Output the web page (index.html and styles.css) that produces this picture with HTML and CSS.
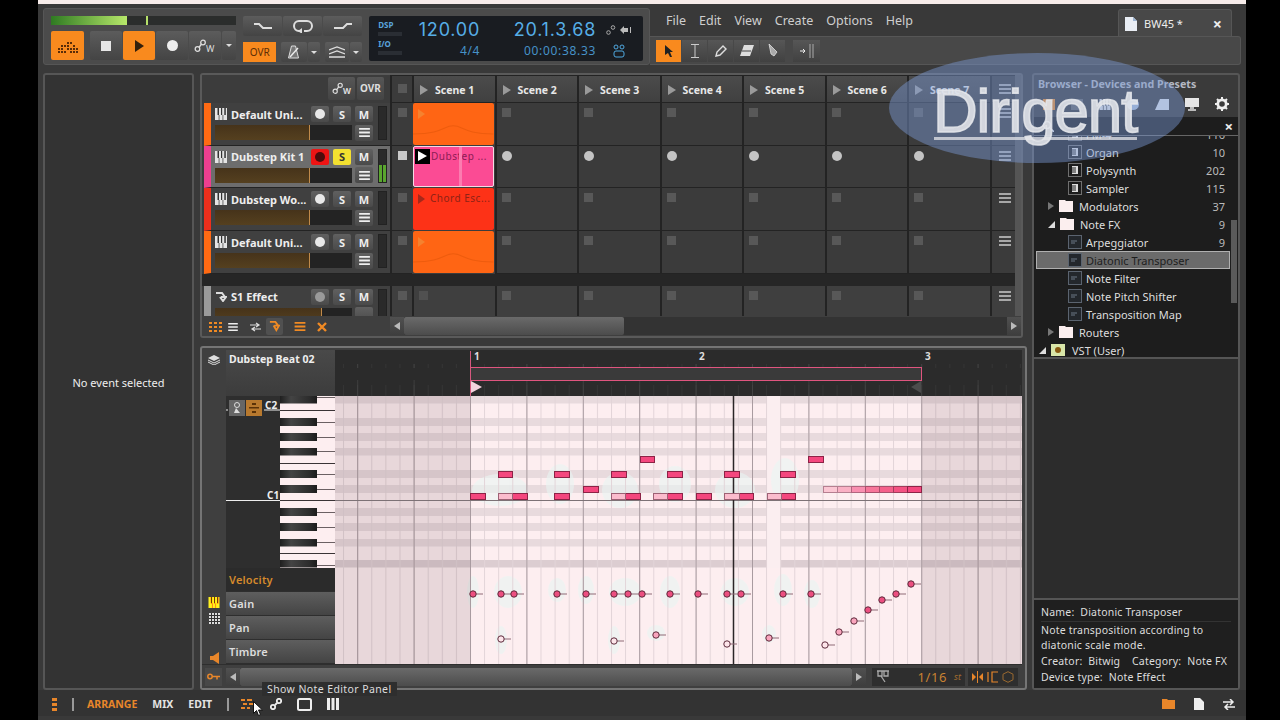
FILE: index.html
```html
<!DOCTYPE html>
<html lang="en">
<head>
  <meta charset="UTF-8">
  <title>Bitwig Studio</title>
  <link rel="stylesheet" href="styles.css">
</head>
<body>
<svg class="defs" width="0" height="0">
  <symbol id="i-piano" viewBox="0 0 12 12"><path d="M0 0h12v12H0z" fill="#e4e4e4"/><path d="M2.5 0h1.5v7H2.5zM6 0h1.2v7H6zM9.3 0h1.5v7H9.3zM3.7 7h.7v5h-.7zM7.6 7h.7v5h-.7z" fill="#333"/></symbol>
  <symbol id="i-list" viewBox="0 0 12 10"><path d="M0 0h12v2H0zM0 4h12v2H0zM0 8h12v2H0z" fill="currentColor"/></symbol>
  <symbol id="i-auto" viewBox="0 0 22 14"><circle cx="3.5" cy="10" r="2.3" fill="none" stroke="currentColor" stroke-width="1.3"/><circle cx="9" cy="3.5" r="2.3" fill="none" stroke="currentColor" stroke-width="1.3"/><path d="M5 8.500 7.500 5" stroke="currentColor" stroke-width="1.3"/><text x="12" y="13" font-size="9" font-family="Noto Sans" fill="currentColor">W</text></symbol>
  <symbol id="i-edit" viewBox="0 0 14 14"><path d="M0 0h14v14H0z" fill="#5b6470"/><path d="M1 1h12v12H1z" fill="#23272c"/><path d="M3 6h6M3 8h4" stroke="#6d7885"/></symbol>
  <symbol id="i-synth" viewBox="0 0 14 14"><path d="M0 0h14v14H0z" fill="#707070"/><path d="M1 1h12v12H1z" fill="#1c1c1c"/><path d="M4 3h6v8H4z" fill="#ddd"/><path d="M4 5h4M4 7h4M4 9h4" stroke="#222"/></symbol>
  <symbol id="i-folder" viewBox="0 0 14 12"><path d="M0 0h6l1 1h7v11H0z" fill="#fbeeee"/></symbol>
</svg>

<div class="app">
  <header class="topbar">
    <section class="transport">
      <div class="tleft">
        <div class="level"><div class="level-fill"></div><div class="level-tick"></div></div>
        <div class="tbuttons">
          <div class="tbtn big on">
            <svg width="20" height="14" viewBox="0 0 20 14"><path d="M0 9h2v2H0zM0 12h2v2H0zM3 6h2v2H3zM3 9h2v2H3zM3 12h2v2H3zM6 6h2v2H6zM6 12h2v2H6zM9 3h2v2H9zM9 6h2v2H9zM9 9h2v2H9zM12 3h2v2h-2zM12 9h2v2h-2zM12 12h2v2h-2zM15 6h2v2h-2zM15 9h2v2h-2zM15 12h2v2h-2zM18 9h2v2h-2zM18 12h2v2h-2z" fill="#5a2c08"/></svg>
          </div>
          <div class="tgroup">
            <div class="tbtn"><span class="stop-sq"></span></div>
            <div class="tbtn on"><span class="play-tri"></span></div>
            <div class="tbtn"><span class="rec-dot"></span></div>
            <div class="tbtn"><svg class="ic-auto" width="22" height="14"><use href="#i-auto"/></svg></div>
            <div class="tbtn narrow"><span class="drop"></span></div>
          </div>
        </div>
      </div>
      <div class="tmid">
        <div class="tgroup upper">
          <div class="tbtn"><svg width="18" height="8" viewBox="0 0 18 8"><path d="M0 2h5l4 4h9" fill="none" stroke="#ddd" stroke-width="2"/></svg></div>
          <div class="tbtn"><svg width="20" height="14" viewBox="0 0 20 14"><path d="M8 12H6a5 5 0 0 1 0-10h8a5 5 0 0 1 0 10h-3" fill="none" stroke="#ddd" stroke-width="2"/><path d="M9 9v6l-4-3z" fill="#ddd"/></svg></div>
          <div class="tbtn"><svg width="18" height="8" viewBox="0 0 18 8"><path d="M0 6h9l4-4h5" fill="none" stroke="#ddd" stroke-width="2"/></svg></div>
        </div>
        <div class="tlower">
          <div class="ovr on">OVR</div>
          <div class="tgroup">
            <div class="tbtn met"><svg width="12" height="14" viewBox="0 0 12 14"><path d="M3.5 1h4l3 12h-10z" fill="#777" stroke="#ddd"/><path d="M2 12 10 3" stroke="#eee" stroke-width="1.4"/></svg></div>
            <div class="tbtn narrow"><span class="drop"></span></div>
          </div>
          <div class="tgroup">
            <div class="tbtn met"><svg width="16" height="12" viewBox="0 0 16 12"><path d="M0 4 8 1l8 3M0 8l8-3 8 3M0 11h16" fill="none" stroke="#ddd" stroke-width="1.3"/></svg></div>
            <div class="tbtn narrow"><span class="drop"></span></div>
          </div>
        </div>
      </div>
      <div class="display">
        <div class="dsp">
          <div class="dsp-label">DSP</div><div class="dsp-bar"></div>
          <div class="dsp-label io">I/O</div><div class="dsp-bar"></div>
        </div>
        <div class="tempo">
          <div class="big-num">120.00</div>
          <div class="small-num">4/4</div>
        </div>
        <div class="position">
          <div class="big-num">20.1.3.68</div>
          <div class="small-num">00:00:38.33</div>
        </div>
        <div class="dicons">
          <svg width="26" height="10" viewBox="0 0 26 10"><circle cx="2.5" cy="7.5" r="1.8" fill="none" stroke="#aaa"/><circle cx="7" cy="2.5" r="1.8" fill="none" stroke="#aaa"/><path d="M14 5l4-4v8zM18 3h4v4h-4zM24 2h1v6h-1z" fill="#bbb"/></svg>
          <svg width="12" height="14" viewBox="0 0 12 14"><circle cx="3" cy="3" r="2" fill="none" stroke="#4fa8e0"/><circle cx="9" cy="3" r="2" fill="none" stroke="#4fa8e0"/><rect x="1" y="7" width="10" height="6" rx="2" fill="none" stroke="#4fa8e0"/></svg>
        </div>
      </div>
    </section>
    <section class="topright">
      <div class="menubar">
        <nav class="menu"><span>File</span><span>Edit</span><span>View</span><span>Create</span><span>Options</span><span>Help</span></nav>
        <div class="doc-tab">
          <svg width="12" height="14" viewBox="0 0 12 14"><path d="M0 0h8l4 4v10H0z" fill="#e9edf4"/><path d="M8 0v4h4" fill="#9db4d2"/></svg>
          <span class="doc-name">BW45 *</span>
          <span class="doc-close">×</span>
        </div>
      </div>
      <div class="toolbar">
        <div class="tool on"><svg width="8" height="12" viewBox="0 0 8 12"><path d="M0 0l8 7H5l2 5-2 0-2-4-3 2z" fill="#222"/></svg></div>
        <div class="tool"><svg width="8" height="14" viewBox="0 0 8 14"><path d="M0 .5h8M0 13.500h8M4 .5v13" stroke="#ccc"/></svg></div>
        <div class="tool"><svg width="12" height="12" viewBox="0 0 12 12"><path d="M1 11l1-4 6-6 3 3-6 6z" fill="none" stroke="#ddd" stroke-width="1.4"/></svg></div>
        <div class="tool"><svg width="14" height="11" viewBox="0 0 14 11"><path d="M4 0h10l-4 11H0z" fill="#ddd"/><path d="M2 6h9" stroke="#444"/></svg></div>
        <div class="tool"><svg width="10" height="13" viewBox="0 0 10 13"><path d="M1 0l8 8-3 4-3-2z" fill="#aaa" stroke="#eee" stroke-width=".7"/></svg></div>
        <div class="tool apart"><svg width="16" height="14" viewBox="0 0 16 14"><path d="M1 7h5M4 5l2 2-2 2" stroke="#eee" fill="none"/><path d="M11 0v14M14 0v14" stroke="#aaa"/></svg></div>
      </div>
    </section>
  </header>

  <main class="main">
    <aside class="inspector">No event selected</aside>

    <div class="center">
      <section class="launcher">
        <div class="lbody">
          <div class="lgrid">
            <div class="lhead-left">
              <div class="mini"><svg width="20" height="13"><use href="#i-auto"/></svg></div>
              <div class="mini">OVR</div>
            </div>
            <div class="cell stopcell head"><i class="sq"></i></div>
            <div class="scene"><b></b>Scene 1</div>
            <div class="scene"><b></b>Scene 2</div>
            <div class="scene"><b></b>Scene 3</div>
            <div class="scene"><b></b>Scene 4</div>
            <div class="scene"><b></b>Scene 5</div>
            <div class="scene"><b></b>Scene 6</div>
            <div class="scene"><b></b>Scene 7</div>
            <div class="cell endcell head"><svg class="lst" width="12" height="10"><use href="#i-list"/></svg></div>

            <div class="track orange">
              <div class="track-main">
                <svg class="pi" width="12" height="12"><use href="#i-piano"/></svg><span class="track-name">Default Uni...</span>
                <span class="btn"><i class="dot"></i></span><span class="btn">S</span><span class="btn">M</span>
                <div class="fader"><div class="fader-fill"></div></div><span class="btn"><svg width="11" height="9"><use href="#i-list"/></svg></span>
              </div>
              <div class="meter"></div>
            </div>
            <div class="cell stopcell"><i class="sq"></i></div>
            <div class="clip c-orange"><span class="clip-tri"></span><svg class="wave" viewBox="0 0 80 40"><path d="M0 30C30 30 30 22 40 22S50 30 80 30" fill="none" stroke="#ee5c0e"/></svg></div>
            <div class="cell"><i class="sq"></i></div><div class="cell"><i class="sq"></i></div><div class="cell"><i class="sq"></i></div><div class="cell"><i class="sq"></i></div><div class="cell"><i class="sq"></i></div><div class="cell"><i class="sq"></i></div>
            <div class="cell endcell"><svg class="lst" width="12" height="10"><use href="#i-list"/></svg></div>

            <div class="track pink sel">
              <div class="track-main">
                <svg class="pi" width="12" height="12"><use href="#i-piano"/></svg><span class="track-name">Dubstep Kit 1</span>
                <span class="btn arm"><i class="dot"></i></span><span class="btn solo">S</span><span class="btn">M</span>
                <div class="fader"><div class="fader-fill"></div></div><span class="btn"><svg width="11" height="9"><use href="#i-list"/></svg></span>
              </div>
              <div class="meter"><div class="meter-on"></div></div>
            </div>
            <div class="cell stopcell"><i class="sq lit"></i></div>
            <div class="clip c-pink playing"><span class="play-box"></span><span class="clip-name">Dubstep ...</span><span class="playline"></span></div>
            <div class="cell"><i class="rd"></i></div><div class="cell"><i class="rd"></i></div><div class="cell"><i class="rd"></i></div><div class="cell"><i class="rd"></i></div><div class="cell"><i class="rd"></i></div><div class="cell"><i class="rd"></i></div>
            <div class="cell endcell"><svg class="lst" width="12" height="10"><use href="#i-list"/></svg></div>

            <div class="track red">
              <div class="track-main">
                <svg class="pi" width="12" height="12"><use href="#i-piano"/></svg><span class="track-name">Dubstep Wo...</span>
                <span class="btn"><i class="dot"></i></span><span class="btn">S</span><span class="btn">M</span>
                <div class="fader"><div class="fader-fill"></div></div><span class="btn"><svg width="11" height="9"><use href="#i-list"/></svg></span>
              </div>
              <div class="meter"></div>
            </div>
            <div class="cell stopcell"><i class="sq"></i></div>
            <div class="clip c-red"><span class="clip-tri dark"></span><span class="clip-name ind">Chord Esc...</span></div>
            <div class="cell"><i class="sq"></i></div><div class="cell"><i class="sq"></i></div><div class="cell"><i class="sq"></i></div><div class="cell"><i class="sq"></i></div><div class="cell"><i class="sq"></i></div><div class="cell"><i class="sq"></i></div>
            <div class="cell endcell"><svg class="lst" width="12" height="10"><use href="#i-list"/></svg></div>

            <div class="track orange">
              <div class="track-main">
                <svg class="pi" width="12" height="12"><use href="#i-piano"/></svg><span class="track-name">Default Uni...</span>
                <span class="btn"><i class="dot"></i></span><span class="btn">S</span><span class="btn">M</span>
                <div class="fader"><div class="fader-fill"></div></div><span class="btn"><svg width="11" height="9"><use href="#i-list"/></svg></span>
              </div>
              <div class="meter"></div>
            </div>
            <div class="cell stopcell"><i class="sq"></i></div>
            <div class="clip c-orange"><span class="clip-tri"></span><svg class="wave" viewBox="0 0 80 40"><path d="M0 30C30 30 30 22 40 22S50 30 80 30" fill="none" stroke="#ee5c0e"/></svg></div>
            <div class="cell"><i class="sq"></i></div><div class="cell"><i class="sq"></i></div><div class="cell"><i class="sq"></i></div><div class="cell"><i class="sq"></i></div><div class="cell"><i class="sq"></i></div><div class="cell"><i class="sq"></i></div>
            <div class="cell endcell"><svg class="lst" width="12" height="10"><use href="#i-list"/></svg></div>

            <div class="spacer"></div>

            <div class="track grey clipped">
              <div class="track-main">
                <svg class="pi" width="12" height="10" viewBox="0 0 12 10"><path d="M1 1h6l3 4M6 5h5l-3 4-3-4" fill="none" stroke="#ddd" stroke-width="2"/></svg><span class="track-name">S1 Effect</span>
                <span class="btn"><i class="dot dim"></i></span><span class="btn">S</span><span class="btn">M</span>
                <div class="fader"><div class="fader-fill long"></div></div><span class="btn"></span>
              </div>
              <div class="meter"></div>
            </div>
            <div class="cell stopcell fx"><i class="sq"></i></div>
            <div class="cell fx"><i class="sq dim"></i></div><div class="cell fx"><i class="sq"></i></div><div class="cell fx"><i class="sq"></i></div><div class="cell fx"><i class="sq"></i></div><div class="cell fx"><i class="sq"></i></div><div class="cell fx"><i class="sq"></i></div><div class="cell fx"><i class="sq"></i></div>
            <div class="cell endcell fx"><svg class="lst" width="12" height="10"><use href="#i-list"/></svg></div>
          </div>
          <div class="vscroll"></div>
        </div>
        <div class="lfoot">
          <div class="lfoot-icons">
            <svg width="13" height="10" viewBox="0 0 13 10"><path d="M0 0h3v2H0zM5 0h3v2H5zM10 0h3v2h-3zM0 4h3v2H0zM5 4h3v2H5zM10 4h3v2h-3zM0 8h3v2H0zM5 8h3v2H5zM10 8h3v2h-3z" fill="#f08a24"/></svg>
            <svg class="wh" width="12" height="8"><use href="#i-list"/></svg>
            <svg class="gap" width="11" height="10" viewBox="0 0 11 10"><path d="M0 3h8M6 1l3 2-3 2M11 7H3M5 5 2 7l3 2" fill="none" stroke="#ddd" stroke-width="1.2"/></svg>
            <span class="boxed"><svg width="11" height="11" viewBox="0 0 12 12"><path d="M1 1h6l3 4M6 5h5l-3 5-3-5" fill="none" stroke="#f08a24" stroke-width="2"/></svg></span>
            <svg class="or gap" width="12" height="9"><use href="#i-list"/></svg>
            <svg class="gap" width="10" height="10" viewBox="0 0 10 10"><path d="M1 1l8 8M9 1l-8 8" stroke="#f08a24" stroke-width="2.4"/></svg>
          </div>
          <div class="hscroll">
            <span class="sbtn"><b class="tri-l"></b></span>
            <div class="strack"><div class="sthumb"></div></div>
            <span class="sbtn"><b class="tri-r"></b></span>
          </div>
        </div>
      </section>

      <section class="editor">
        <div class="estrip">
          <svg class="layers" width="12" height="10" viewBox="0 0 12 10"><path d="M6 0l6 3-6 3-6-3z" fill="#ddd"/><path d="M0 5l6 3 6-3M0 7l6 3 6-3" fill="none" stroke="#ddd"/></svg>
          <div class="estrip-low">
            <svg width="12" height="11"><use href="#i-piano"/></svg>
            <svg width="11" height="11" viewBox="0 0 11 11"><path d="M0 0h11v11H0z" fill="#ddd"/><path d="M2.5 0v11M5.500 0v11M8.500 0v11M0 2.500h11M0 5.500h11M0 8.500h11" stroke="#333"/></svg>
            <svg class="spk" width="9" height="12" viewBox="0 0 9 12"><path d="M0 4h3l6-4v12L3 8H0z" fill="#e8862a"/></svg>
          </div>
        </div>
        <div class="ehead">Dubstep Beat 02</div>
        <div class="eruler">
          <svg width="687" height="46" viewBox="335 350 687 46">
            <defs>
              <pattern id="rsub" x="470" y="0" width="14.1" height="46" patternUnits="userSpaceOnUse"><path d="M0 17v29" stroke="#3d3d3d"/></pattern>
              <pattern id="rbeat" x="470" y="0" width="56.4" height="46" patternUnits="userSpaceOnUse"><path d="M0 12v34" stroke="#505050"/></pattern>
              <linearGradient id="blk" x1="0" x2="1" y1="0" y2="0"><stop offset="0" stop-color="#1f1f1f"/><stop offset=".3" stop-color="#444"/><stop offset=".8" stop-color="#2c2c2c"/><stop offset="1" stop-color="#1c1c1c"/></linearGradient>
            </defs>
            <rect x="335" y="350" width="687" height="46" fill="#2b2b2b"/>
            <rect x="335" y="364" width="687" height="32" fill="url(#rsub)"/>
            <rect x="335" y="364" width="687" height="32" fill="url(#rbeat)"/>
            <rect x="470.500" y="367.500" width="451" height="13" fill="#3a3a3a" stroke="#e0557f"/>
            <path d="M470.500 351v45" stroke="#d6587e"/>
            <path d="M471 381l11 6-11 6z" fill="#f3d3dc"/>
            <path d="M921 381l-10 6 10 6z" fill="#4c4c4c"/>
            <text x="474" y="360" class="bar-num">1</text>
            <text x="699" y="360" class="bar-num">2</text>
            <text x="925" y="360" class="bar-num">3</text>
          </svg>
        </div>
        <div class="keys">
          <span class="kbtn"><svg width="11" height="12" viewBox="0 0 11 12"><circle cx="5" cy="3" r="2.500" fill="none" stroke="#ddd"/><path d="M4 6l4 5H2z" fill="#ddd"/></svg></span><span class="kbtn amber"><svg width="10" height="12" viewBox="0 0 10 12"><path d="M0 5h10v1.500H0zM3 1h4v2H3zM3 9h4v2H3z" fill="#5a3208"/></svg></span>
          <span class="klabel c2">C2</span>
          <span class="klabel c1">C1</span>
          <svg class="piano" width="109" height="172" viewBox="226 396 109 172">
            <rect x="280" y="396" width="55" height="172" fill="#fdeef0"/>
            <path d="M226 410h2M264 410h16M226 500.500h54" stroke="#eee"/>
            <path d="M280 410.500h55M280 463.500h55M280 500.500h55M280 553.500h55" stroke="#3a3335"/>
            <path d="M317 422.500h18M317 437.500h18M317 451.500h18M317 474.500h18M317 489.500h18M317 512.500h18M317 527.500h18M317 542.500h18M317 565.500h18M317 397.500h18" stroke="#6b6063"/>
            <g fill="url(#blk)">
              <rect x="280" y="396" width="37" height="7.500"/><rect x="280" y="418" width="37" height="8"/><rect x="280" y="433" width="37" height="8"/><rect x="280" y="448" width="37" height="7.500"/><rect x="280" y="470" width="37" height="8"/><rect x="280" y="485" width="37" height="8"/><rect x="280" y="508" width="37" height="8"/><rect x="280" y="523" width="37" height="8"/><rect x="280" y="539" width="37" height="7.500"/><rect x="280" y="560" width="37" height="7.500"/>
            </g>
          </svg>
        </div>
        <div class="roll">
          <svg width="687" height="268" viewBox="335 396 687 268">
            <defs>
              <pattern id="sub" x="470" y="0" width="14.1" height="20" patternUnits="userSpaceOnUse"><path d="M.5 0v20" stroke="#e2d4d8"/></pattern>
              <pattern id="beat" x="470" y="0" width="56.4" height="20" patternUnits="userSpaceOnUse"><path d="M.5 0v20" stroke="#a99ba0"/></pattern>
            </defs>
            <rect x="335" y="396" width="687" height="268" fill="#fdeef0"/>
            <g fill="#e8dadd">
              <rect x="335" y="396" width="687" height="7.500"/><rect x="335" y="418" width="687" height="8"/><rect x="335" y="433" width="687" height="8"/><rect x="335" y="448" width="687" height="7.500"/><rect x="335" y="470" width="687" height="8"/><rect x="335" y="485" width="687" height="8"/><rect x="335" y="508" width="687" height="8"/><rect x="335" y="523" width="687" height="8"/><rect x="335" y="539" width="687" height="7.500"/><rect x="335" y="560" width="687" height="7.500" fill="#dccdd1"/>
            </g>
            <rect x="767" y="396" width="14" height="172" fill="#fbeef0"/>
            <g fill="#e9f6f3" opacity=".6">
              <ellipse cx="560" cy="484" rx="14" ry="20"/><ellipse cx="620" cy="490" rx="18" ry="18"/><ellipse cx="675" cy="484" rx="16" ry="18"/><ellipse cx="735" cy="490" rx="20" ry="18"/><ellipse cx="785" cy="480" rx="14" ry="22"/><ellipse cx="500" cy="490" rx="28" ry="16"/>
              <ellipse cx="473" cy="592" rx="6" ry="16"/><ellipse cx="508" cy="592" rx="14" ry="16"/><ellipse cx="557" cy="590" rx="9" ry="12"/><ellipse cx="586" cy="590" rx="8" ry="14"/><ellipse cx="625" cy="592" rx="16" ry="14"/><ellipse cx="670" cy="592" rx="10" ry="16"/><ellipse cx="735" cy="592" rx="14" ry="14"/><ellipse cx="783" cy="590" rx="9" ry="16"/><ellipse cx="812" cy="594" rx="8" ry="14"/>
              <ellipse cx="501" cy="640" rx="6" ry="14"/><ellipse cx="614" cy="640" rx="6" ry="14"/><ellipse cx="656" cy="633" rx="9" ry="8"/><ellipse cx="769" cy="634" rx="7" ry="9"/>
            </g>
            <rect x="335" y="396" width="687" height="268" fill="url(#sub)"/>
            <rect x="335" y="396" width="687" height="268" fill="url(#beat)"/>
            <rect x="335" y="396" width="135" height="268" fill="#5a3c44" opacity=".13"/>
            <rect x="922" y="396" width="100" height="268" fill="#5a3c44" opacity=".13"/>
            <path d="M335 500.500h687" stroke="#7d7276"/>
            <path d="M733.500 396v268" stroke="#2b2527" stroke-width="1.500"/>
            <g class="notes">
              <rect x="640.500" y="456.500" width="14" height="6"/><rect x="808.500" y="456.500" width="15" height="6"/>
              <rect x="498.500" y="471.500" width="14" height="6"/><rect x="554.500" y="471.500" width="15" height="6"/><rect x="611.500" y="471.500" width="15" height="6"/><rect x="667.500" y="471.500" width="15" height="6"/><rect x="724.500" y="471.500" width="15" height="6"/><rect x="780.500" y="471.500" width="15" height="6"/>
              <rect x="583.500" y="486.500" width="15" height="6"/>
              <rect x="470.500" y="493.500" width="15" height="6"/><rect x="512.500" y="493.500" width="15" height="6"/><rect x="554.500" y="493.500" width="15" height="6"/><rect x="625.500" y="493.500" width="15" height="6"/><rect x="667.500" y="493.500" width="15" height="6"/><rect x="696.500" y="493.500" width="15" height="6"/><rect x="739.500" y="493.500" width="14" height="6"/><rect x="781.500" y="493.500" width="14" height="6"/>
              <g class="soft">
                <rect x="498.500" y="493.500" width="14" height="6"/><rect x="611.500" y="493.500" width="14" height="6"/><rect x="653.500" y="493.500" width="14" height="6"/><rect x="724.500" y="493.500" width="15" height="6"/><rect x="767.500" y="493.500" width="14" height="6"/>
              </g>
              <rect class="n1" x="823.500" y="486.500" width="14" height="6"/><rect class="n2" x="837.500" y="486.500" width="14" height="6"/><rect class="n3" x="851.500" y="486.500" width="14" height="6"/><rect class="n4" x="865.500" y="486.500" width="14" height="6"/><rect class="n5" x="879.500" y="486.500" width="14" height="6"/><rect class="n6" x="893.500" y="486.500" width="14" height="6"/><rect x="907.500" y="486.500" width="14" height="6"/>
            </g>
            <g class="stems">
              <path d="M473 594h10M501 594h10M514 594h10M557 594h10M586 594h10M614 594h10M628 594h10M642 594h10M670 594h10M698 594h10M727 594h10M741 594h10M783 594h10M811 594h10M501 639h10M614 641h10M656 635h10M727 644h10M769 638h10M825 645h10M839 632h10M854 621h10M868 610h10M882 600h10M896 594h10M911 584h10"/>
            </g>
            <g class="vel">
              <circle cx="473" cy="594"/><circle cx="501" cy="594"/><circle cx="514" cy="594"/><circle cx="557" cy="594"/><circle cx="586" cy="594"/><circle cx="614" cy="594"/><circle cx="628" cy="594"/><circle cx="642" cy="594"/><circle cx="670" cy="594"/><circle cx="698" cy="594"/><circle cx="727" cy="594"/><circle cx="741" cy="594"/><circle cx="783" cy="594"/><circle cx="811" cy="594"/><circle cx="868" cy="610"/><circle cx="882" cy="600"/><circle cx="896" cy="594"/><circle cx="911" cy="584"/>
              <circle class="v2" cx="854" cy="621"/><circle class="v2" cx="839" cy="632"/><circle class="v2" cx="769" cy="638"/><circle class="v2" cx="656" cy="635"/>
              <circle class="v3" cx="501" cy="639"/><circle class="v3" cx="614" cy="641"/><circle class="v3" cx="727" cy="644"/><circle class="v3" cx="825" cy="645"/>
            </g>
          </svg>
        </div>
        <div class="elabels">
          <div class="elabel vel-on">Velocity</div>
          <div class="elabel">Gain</div>
          <div class="elabel">Pan</div>
          <div class="elabel">Timbre</div>
        </div>
        <div class="efoot">
          <span class="keybtn"><svg width="13" height="7" viewBox="0 0 13 7"><circle cx="3" cy="3.500" r="2.200" fill="none" stroke="#e8862a" stroke-width="1.500"/><path d="M5 3.500h8M10 3.500v3" stroke="#e8862a" stroke-width="1.500"/></svg></span>
          <div class="hscroll wide">
            <span class="sbtn"><b class="tri-l"></b></span>
            <div class="strack"><div class="sthumb full"></div></div>
            <span class="sbtn"><b class="tri-r"></b></span>
          </div>
          <div class="gridbox">
            <svg width="14" height="13" viewBox="0 0 14 13"><path d="M1 1h12M2 1v5h4V1M8 1v5h4V1M5 6l4 6" fill="none" stroke="#aaa" stroke-width="1.300"/></svg>
            <span class="gridval">1/16</span><span class="gridunit">st</span>
          </div>
          <div class="snapbox">
            <svg width="42" height="12" viewBox="0 0 42 12"><path d="M0 2l4 4-4 4zM11 2L7 6l4 4z" fill="#e8862a"/><path d="M5.500 0v12" stroke="#e8862a"/><path d="M16 1v10M26 1h-6v10h6" fill="none" stroke="#e8862a" stroke-width="1.200"/><path d="M36 .7l5 2.500v5.600l-5 2.500-5-2.500V3.200z" fill="none" stroke="#9c6a30"/></svg>
          </div>
        </div>
      </section>
    </div>

    <aside class="browser">
      <h2 class="b-title">Browser - Devices and Presets</h2>
      <div class="b-tabs">
        <span class="b-ic orange"></span>
        <span class="b-ic"></span>
        <svg width="12" height="11"><use href="#i-piano"/></svg>
        <span class="b-ic disc"></span>
        <svg width="14" height="11" viewBox="0 0 14 11"><path d="M5 0h9v11H0z" fill="#dfe3ea"/></svg>
        <svg width="14" height="13" viewBox="0 0 14 13"><path d="M0 0h14v9H0z" fill="#e6e6e6"/><path d="M5 9h4v2h2v2H3v-2h2z" fill="#bbb"/></svg>
        <svg width="14" height="14" viewBox="0 0 14 14"><circle cx="7" cy="7" r="4.200" fill="none" stroke="#eee" stroke-width="2.800"/><path d="M7 0v3M7 11v3M0 7h3M11 7h3M2 2l2 2M10 10l2 2M12 2l-2 2M4 10l-2 2" stroke="#eee" stroke-width="2"/></svg>
      </div>
      <div class="b-search"><svg width="12" height="12" viewBox="0 0 12 12"><circle cx="5" cy="5" r="3.500" fill="none" stroke="#eee" stroke-width="1.600"/><path d="M8 8l4 4" stroke="#eee" stroke-width="1.600"/></svg><span class="b-x">×</span></div>
      <div class="b-list">
        <div class="b-rows">
          <div class="row d2"><svg width="14" height="14"><use href="#i-synth"/></svg><span class="rname">FM-4</span><span class="rcount">116</span></div>
          <div class="row d2"><svg width="14" height="14"><use href="#i-synth"/></svg><span class="rname">Organ</span><span class="rcount">10</span></div>
          <div class="row d2"><svg width="14" height="14"><use href="#i-synth"/></svg><span class="rname">Polysynth</span><span class="rcount">202</span></div>
          <div class="row d2"><svg width="14" height="14"><use href="#i-synth"/></svg><span class="rname">Sampler</span><span class="rcount">115</span></div>
          <div class="row d1"><b class="arrow"></b><svg width="14" height="12"><use href="#i-folder"/></svg><span class="rname">Modulators</span><span class="rcount">37</span></div>
          <div class="row d1"><b class="arrow open"></b><svg width="14" height="12"><use href="#i-folder"/></svg><span class="rname">Note FX</span><span class="rcount">9</span></div>
          <div class="row d2"><svg width="14" height="14"><use href="#i-edit"/></svg><span class="rname">Arpeggiator</span><span class="rcount">9</span></div>
          <div class="row d2 selected"><svg width="14" height="14"><use href="#i-edit"/></svg><span class="rname">Diatonic Transposer</span></div>
          <div class="row d2"><svg width="14" height="14"><use href="#i-edit"/></svg><span class="rname">Note Filter</span></div>
          <div class="row d2"><svg width="14" height="14"><use href="#i-edit"/></svg><span class="rname">Note Pitch Shifter</span></div>
          <div class="row d2"><svg width="14" height="14"><use href="#i-edit"/></svg><span class="rname">Transposition Map</span></div>
          <div class="row d1"><b class="arrow"></b><svg width="14" height="12"><use href="#i-folder"/></svg><span class="rname">Routers</span></div>
          <div class="row d0"><b class="arrow open"></b><svg width="14" height="12" viewBox="0 0 14 12"><path d="M0 0h14v12H0z" fill="#d9e6a8"/><circle cx="7" cy="6" r="3" fill="#8a5a10"/></svg><span class="rname">VST (User)</span></div>
        </div>
        <div class="b-scroll"></div>
      </div>
      <div class="b-blank"></div>
      <div class="b-info">
        <div class="info-name">Name:&nbsp; Diatonic Transposer</div>
        <div class="info-desc">Note transposition according to<br>diatonic scale mode.</div>
        <div class="info-line">Creator:&nbsp; Bitwig &nbsp;&nbsp; Category:&nbsp; Note FX</div>
        <div class="info-line">Device type:&nbsp; Note Effect</div>
      </div>
    </aside>
  </main>

  <footer class="bottombar">
    <svg width="5" height="13" viewBox="0 0 5 13"><path d="M0 0h5v3H0zM0 5h5v3H0zM0 10h5v3H0z" fill="#e8862a"/></svg>
    <span class="sep"></span>
    <span class="mode active">ARRANGE</span>
    <span class="mode">MIX</span>
    <span class="mode last">EDIT</span>
    <span class="sep"></span>
    <div class="panels">
      <svg width="14" height="12" viewBox="0 0 14 12"><path d="M0 1h4v2H0zM6 1h5v2H6zM2 5h4v2H2zM8 5h6v2H8zM0 9h4v2H0zM6 9h3v2H6z" fill="#e8862a"/></svg>
      <svg width="12" height="12" viewBox="0 0 12 12"><circle cx="3" cy="9" r="2.200" fill="none" stroke="#eee" stroke-width="1.800"/><circle cx="9" cy="3" r="2.200" fill="none" stroke="#eee" stroke-width="1.800"/><path d="M5 7l2-2" stroke="#eee" stroke-width="1.800"/></svg>
      <svg width="15" height="13" viewBox="0 0 15 13"><rect x="1" y="1" width="13" height="11" rx="1.500" fill="none" stroke="#eee" stroke-width="2"/></svg>
      <svg width="12" height="12" viewBox="0 0 12 12"><path d="M0 0h3v12H0zM4.500 0h3v12h-3zM9 0h3v12H9z" fill="#eee"/></svg>
    </div>
    <div class="bright">
      <svg width="13" height="10" viewBox="0 0 13 10"><path d="M0 0h5l1 1h7v9H0z" fill="#e8862a"/></svg>
      <svg width="10" height="12" viewBox="0 0 10 12"><path d="M0 0h6l4 4v8H0z" fill="#eee"/></svg>
      <svg width="12" height="11" viewBox="0 0 12 11"><path d="M0 3h9M7 0l3 3-3 3M12 8H3M5 5 2 8l3 3" fill="none" stroke="#eee" stroke-width="1.500"/></svg>
    </div>
  </footer>

  <div class="tooltip">Show Note Editor Panel</div>
  <svg class="cursor" width="11" height="15" viewBox="0 0 11 15"><path d="M.5.500v12l3-3 2 5 2-1-2-4.500h4z" fill="#fff" stroke="#111"/></svg>
  <div class="watermark"><div class="wm-ellipse"></div><div class="wm-text">Dirigent</div><div class="wm-line"></div></div>
</div>
</body>
</html>
```

FILE: styles.css
```css
* {
  box-sizing: border-box;
}
html, body {
  margin: 0;
  height: 100%;
  overflow: hidden;
  background: #000;
}
body {
  font-family: "Noto Sans", "Open Sans", sans-serif;
  font-size: 11px;
  color: #ddd;
}
.defs {
  position: absolute;
}
i, b {
  display: block;
}
svg {
  display: block;
  flex: none;
}

.app {
  position: relative;
  width: 1208px;
  height: 720px;
  margin-left: 38px;
  border-top: 4px solid #f7ecea;
  background: #393939;
  overflow: hidden;
}

/* Barra superior */
.topbar {
  display: flex;
  height: 69px;
  padding: 4px 5px 0;
}
.transport {
  display: flex;
  width: 607px;
  height: 57px;
  padding: 7px 6px 0 7px;
  background: #4b4b4b;
  border: 1px solid #565656;
  border-radius: 3px;
}
.tleft {
  width: 186px;
  margin-right: 7px;
}
.level {
  position: relative;
  height: 9px;
  background: #2b2d2c;
}
.level-fill {
  width: 76px;
  height: 9px;
  background: linear-gradient(90deg, #2f7a22, #b7e86a);
}
.level-tick {
  position: absolute;
  left: 95px;
  top: 0;
  width: 2px;
  height: 9px;
  background: #b6e06a;
}
.tbuttons {
  display: flex;
  gap: 6px;
  margin-top: 6px;
}
.tgroup {
  display: flex;
  gap: 1px;
}
.tbtn {
  display: flex;
  flex: none;
  align-items: center;
  justify-content: center;
  width: 32px;
  height: 29px;
  background: linear-gradient(#5c5c5c, #444);
  border-radius: 2px;
  color: #ddd;
}
.tbtn.on, .ovr.on, .tool.on {
  background: #f98a1e;
}
.tbtn.big {
  width: 33px;
}
.tbtn.narrow {
  width: 14px;
}
.stop-sq {
  width: 10px;
  height: 10px;
  background: #e6e6e6;
}
.play-tri {
  border-left: 9px solid #33200c;
  border-top: 6px solid transparent;
  border-bottom: 6px solid transparent;
}
.rec-dot {
  width: 11px;
  height: 11px;
  border-radius: 50%;
  background: #eee;
}
.drop {
  border-top: 3px solid #ddd;
  border-left: 3px solid transparent;
  border-right: 3px solid transparent;
}
.tmid {
  width: 119px;
  margin-right: 7px;
}
.tmid .upper .tbtn {
  width: 39px;
  height: 20px;
}
.tlower {
  display: flex;
  margin-top: 6px;
  gap: 5px;
}
.ovr {
  width: 34px;
  height: 20px;
  font-size: 10px;
  line-height: 21px;
  text-align: center;
  color: #5c2d06;
}
.tlower .tbtn {
  height: 20px;
}
.tlower .tbtn.met {
  width: 26px;
}
.tlower .tgroup:last-child .tbtn.met {
  width: 24px;
}
.tlower .tbtn.narrow {
  width: 12px;
}
.display {
  display: flex;
  width: 275px;
  height: 45px;
  background: #191c21;
  border-radius: 2px;
  padding: 3px 0 0 9px;
  color: #56aee6;
}
.dsp {
  width: 33px;
}
.dsp-label {
  font-size: 8px;
  font-weight: 700;
  line-height: 11px;
  color: #5aa4dc;
}
.dsp-label.io {
  margin-top: 2px;
}
.dsp-bar {
  width: 24px;
  height: 4px;
  margin-top: 2px;
  background: #2a2e34;
}
.big-num {
  font-size: 18px;
  line-height: 22px;
  letter-spacing: .8px;
  text-align: right;
  font-family: "Inter", "Noto Sans", sans-serif;
  font-weight: 400;
}
.small-num {
  margin-top: 3px;
  font-size: 12px;
  line-height: 14px;
  letter-spacing: .7px;
  text-align: right;
  color: #4692c8;
}
.tempo {
  width: 69px;
}
.position {
  width: 116px;
}
.dicons {
  display: flex;
  flex-direction: column;
  align-items: center;
  gap: 9px;
  margin: 6px 0 0 10px;
}

.topright {
  flex: 1;
  display: flex;
  flex-direction: column;
  min-width: 0;
}
.menubar {
  display: flex;
  justify-content: space-between;
  height: 28px;
  padding-right: 9px;
}
.menu {
  display: flex;
  gap: 13px;
  padding: 4px 0 0 16px;
  font-size: 12.5px;
  line-height: 17px;
  color: #cfcfcf;
}
.doc-tab {
  display: flex;
  align-items: center;
  width: 114px;
  height: 28px;
  margin-top: 1px;
  padding: 0 8px 0 6px;
  background: #484848;
  border-radius: 3px 3px 0 0;
  border: 1px solid #565656;
  border-bottom: none;
}
.doc-name {
  flex: 1;
  margin-left: 7px;
  font-size: 11px;
  color: #eee;
}
.doc-close {
  font-size: 16px;
  font-weight: 700;
  color: #eee;
  margin-right: 1px;
}
.toolbar {
  display: flex;
  align-items: center;
  height: 29px;
  padding-left: 6px;
  background: #484848;
  border: 1px solid #565656;
  border-left: none;
  border-radius: 0 3px 3px 0;
}
.tool {
  display: flex;
  align-items: center;
  justify-content: center;
  width: 25px;
  height: 22px;
  margin-right: 1px;
  background: linear-gradient(#565656, #414141);
}
.tool.apart {
  margin-left: 7px;
  width: 27px;
}

/* Zona central */
.main {
  display: grid;
  grid-template-columns: 150px 827px 208px;
  column-gap: 6px;
  height: 617px;
  padding-left: 5px;
}
.inspector {
  margin-right: -1px;
  padding-top: 300px;
  background: #333;
  border: 2px solid #565656;
  border-radius: 3px;
  text-align: center;
  font-size: 11px;
  color: #eee;
}
.center {
  margin-left: 1px;
  display: flex;
  flex-direction: column;
  gap: 8px;
  width: 827px;
}

/* Lanzador de clips */
.launcher {
  height: 265px;
  width: 823px;
  background: #3c3c3c;
  border: 2px solid #5a5a5a;
  border-radius: 3px;
  overflow: hidden;
}
.lbody {
  display: flex;
  height: 241px;
}
.lgrid {
  display: grid;
  grid-template-columns: 188px 22px repeat(7, 82.5px) 25px;
  grid-template-rows: 28px repeat(4, 42.7px) 12px 31px;
  overflow: hidden;
}
.lhead-left {
  display: flex;
  justify-content: flex-end;
  gap: 2px;
  padding: 2px 6px 3px 0;
  background: #3c3c3c;
}
.mini {
  width: 27px;
  height: 23px;
  background: linear-gradient(#565656, #444);
  border-radius: 2px;
  color: #ddd;
  font-size: 10px;
  font-weight: 700;
  line-height: 23px;
  text-align: center;
}
.mini svg {
  margin: 5px 0 0 4px;
}
.cell {
  position: relative;
  background: #3b3b3b;
  border-left: 2px solid #232323;
  border-bottom: 1px solid #232323;
}
.cell.head {
  border-top: 1px solid #232323;
}
.cell.fx {
  background: #3f3f3f;
}
.sq {
  position: absolute;
  left: 5px;
  top: 5px;
  width: 9px;
  height: 9px;
  background: #585858;
}
.sq.lit {
  background: #c9c9c9;
}
.sq.dim {
  background: #505050;
}
.rd {
  position: absolute;
  left: 5px;
  top: 5px;
  width: 10px;
  height: 10px;
  border-radius: 50%;
  background: #c4c4c4;
}
.stopcell .sq {
  left: 6px;
  top: 5px;
}
.stopcell.head .sq {
  top: 8px;
}
.scene {
  display: flex;
  align-items: center;
  padding: 1px 0 0 6px;
  background: linear-gradient(#4b4b4b, #404040);
  border-left: 2px solid #232323;
  border-top: 1px solid #232323;
  border-bottom: 1px solid #232323;
  font-size: 10.5px;
  font-weight: 700;
  color: #e8e8e8;
}
.scene b {
  margin-right: 7px;
  border-left: 8px solid #9a9a9a;
  border-top: 5px solid transparent;
  border-bottom: 5px solid transparent;
}
.lst {
  position: absolute;
  left: 7px;
  top: 5px;
  color: #a8a8a8;
}
.head .lst {
  top: 8px;
}
.clip {
  position: relative;
  margin: 0 1px 1px 1px;
  border-radius: 2px;
  overflow: hidden;
}
.c-orange {
  background: #ff6514;
}
.c-red {
  background: #fd3217;
}
.c-pink {
  background: #fb4b94;
  border: 1px solid #f5d9e4;
}
.wave {
  position: absolute;
  left: 0;
  top: 0;
  width: 100%;
  height: 100%;
}
.clip-tri {
  position: absolute;
  left: 5px;
  top: 6px;
  border-left: 7px solid #f5822f;
  border-top: 5px solid transparent;
  border-bottom: 5px solid transparent;
}
.clip-tri.dark {
  border-left-color: #a5281a;
}
.play-box {
  position: absolute;
  left: 1px;
  top: 2px;
  width: 15px;
  height: 15px;
  background: #000;
}
.play-box::after {
  content: "";
  position: absolute;
  left: 3px;
  top: 2px;
  border-left: 9px solid #fff;
  border-top: 5.5px solid transparent;
  border-bottom: 5.5px solid transparent;
}
.clip-name {
  position: absolute;
  left: 17px;
  top: 2px;
  font-size: 10px;
  letter-spacing: .5px;
  line-height: 14px;
  white-space: nowrap;
  color: #8c1c55;
}
.clip-name.ind {
  top: 3px;
  color: #8e2216;
}
.playline {
  position: absolute;
  left: 45px;
  top: 0;
  width: 3px;
  height: 100%;
  background: #fb7cb0;
}
.spacer {
  grid-column: 1 / -1;
  background: #262626;
}

.track {
  display: flex;
  margin-left: 2px;
  border-left: 7px solid;
  border-bottom: 1px solid #232323;
  background: #404040;
  min-height: 0;
}
.track.orange {
  border-left-color: #ff6a13;
}
.track.pink {
  border-left-color: #ee3f8f;
}
.track.red {
  border-left-color: #ee2f1c;
}
.track.grey {
  border-left-color: #9a9a9a;
}
.track.sel {
  background: #6d6d6d;
}
.track-main {
  display: grid;
  grid-template-columns: 12px 76px repeat(3, 18px);
  grid-template-rows: 16px 15px;
  column-gap: 4px;
  row-gap: 3px;
  width: 162px;
  padding: 3px 0 0 4px;
  align-items: center;
}
.track-name {
  font-size: 11px;
  font-weight: 700;
  color: #eee;
  white-space: nowrap;
}
.btn {
  display: flex;
  align-items: center;
  justify-content: center;
  height: 16px;
  background: linear-gradient(#606060, #4a4a4a);
  border-radius: 2px;
  font-size: 11px;
  font-weight: 700;
  color: #eee;
}
.btn.arm {
  background: #ee1414;
}
.btn.arm .dot {
  background: #4d0c0c;
}
.btn.solo {
  background: #f3e030;
  color: #333;
}
.dot {
  width: 10px;
  height: 10px;
  border-radius: 50%;
  background: #e8e8e8;
}
.dot.dim {
  background: #9a9a9a;
}
.fader {
  grid-column: 1 / 5;
  height: 15px;
  background: #232323;
  width: 137px;
}
.fader-fill {
  width: 95px;
  height: 15px;
  background: linear-gradient(#46331a, #55401f);
  border-right: 1px solid #c08a4a;
}
.fader-fill.long {
  width: 107px;
}
.meter {
  position: relative;
  width: 9px;
  height: 34px;
  margin: 3px 0 0 5px;
  background: #2a2a2a;
  border: 1px solid #222;
}
.meter-on {
  position: absolute;
  left: 0;
  right: 0;
  bottom: 0;
  height: 17px;
  background: linear-gradient(90deg, #5aa62f 45%, #222 45%, #222 55%, #5aa62f 55%);
}
.vscroll {
  width: 6px;
  background: #555;
  margin-left: 0;
}

.lfoot {
  display: flex;
  height: 20px;
  padding-top: 1px;
  background: #3f3f3f;
}
.lfoot-icons {
  display: flex;
  align-items: center;
  width: 188px;
  padding-left: 7px;
  gap: 5px;
}
.wh {
  color: #eee;
}
.or {
  color: #f08a24;
}
.lfoot-icons .gap {
  margin-left: 6px;
}
.boxed {
  padding: 3px;
  background: #505050;
  border-radius: 2px;
}
.hscroll {
  display: flex;
  flex: 1;
  margin-left: 0;
  height: 18px;
}
.sbtn {
  display: flex;
  align-items: center;
  justify-content: center;
  width: 14px;
  background: linear-gradient(#505050, #3e3e3e);
}
.tri-l {
  border-right: 6px solid #bbb;
  border-top: 4px solid transparent;
  border-bottom: 4px solid transparent;
}
.tri-r {
  border-left: 6px solid #bbb;
  border-top: 4px solid transparent;
  border-bottom: 4px solid transparent;
}
.strack {
  flex: 1;
  background: #333;
}
.sthumb {
  width: 220px;
  height: 18px;
  background: linear-gradient(#6a6a6a, #4c4c4c);
  border-radius: 2px;
}
.sthumb.full {
  width: 100%;
}

/* Editor de notas */
.editor {
  display: grid;
  grid-template-columns: 24px 109px 687px;
  grid-template-rows: 46px 172px 96px 1fr;
  height: 344px;
  padding-top: 2px;
  background: #3f3f3f;
  border: 2px solid #757575;
  border-radius: 3px;
}
.estrip {
  grid-row: 1 / 4;
  display: flex;
  flex-direction: column;
  align-items: center;
  padding: 5px 0 0 0;
  background: #3f3f3f;
}
.estrip-low {
  display: flex;
  flex-direction: column;
  align-items: center;
  gap: 5px;
  margin-top: 232px;
}
.estrip-low svg:first-child {
  filter: sepia(1) saturate(6) hue-rotate(-12deg);
}
.estrip-low .spk {
  margin-top: 23px;
}
.ehead {
  padding: 2px 0 0 3px;
  background: linear-gradient(#494949, #3c3c3c);
  font-size: 10.5px;
  font-weight: 700;
  color: #eee;
}
.eruler {
  height: 46px;
}
.bar-num {
  font-family: "Noto Sans", sans-serif;
  font-size: 10px;
  font-weight: 700;
  fill: #ddd;
}
.keys {
  position: relative;
  background: #2e2e2e;
  display: flex;
  gap: 1px;
  padding: 4px 0 0 3px;
}
.piano {
  position: absolute;
  left: 0;
  top: 0;
}
.kbtn {
  position: relative;
  z-index: 1;
  display: flex;
  align-items: center;
  justify-content: center;
  width: 16px;
  height: 16px;
  background: #666;
}
.kbtn.amber {
  background: #b8792e;
}
.klabel {
  position: absolute;
  z-index: 1;
  font-size: 10px;
  font-weight: 700;
  line-height: 12px;
  color: #eee;
}
.klabel.c2 {
  left: 39px;
  top: 3px;
}
.klabel.c1 {
  left: 41px;
  top: 93px;
}
.roll {
  grid-column: 3;
  grid-row: 2 / 4;
}
.elabels {
  grid-column: 2;
  grid-row: 3;
}
.elabel {
  height: 24px;
  padding: 4px 0 0 3px;
  background: linear-gradient(#5e5e5e, #444);
  border-bottom: 1px solid #2e2e2e;
  font-size: 11px;
  font-weight: 600;
  letter-spacing: .2px;
  color: #ddd;
}
.elabel.vel-on {
  background: #2b2b2b;
  color: #d58a2c;
}
.notes rect {
  fill: #f4477e;
  stroke: #8c2346;
}
.notes .soft rect {
  fill: #fbbccd;
  stroke: #9d6174;
}
.notes .n1 {
  fill: #fbc6d3;
  stroke: #b57f90;
}
.notes .n2 {
  fill: #fab0c4;
  stroke: #b57f90;
}
.notes .n3 {
  fill: #f98fb0;
  stroke: #b0667f;
}
.notes .n4 {
  fill: #f7769a;
  stroke: #a8506c;
}
.notes .n5 {
  fill: #f5608a;
  stroke: #a8506c;
}
.notes .n6 {
  fill: #f45282;
  stroke: #a03c5a;
}
.stems path {
  stroke: #8f6a76;
  fill: none;
}
.vel circle {
  r: 3.2px;
  fill: #ec4f80;
  stroke: #5d2a3b;
}
.vel .v2 {
  fill: #f9a5bd;
}
.vel .v3 {
  fill: #fde5ea;
}
.efoot {
  grid-column: 1 / 4;
  display: flex;
  align-items: center;
  height: 24px;
  padding-left: 3px;
  background: #3f3f3f;
  border-top: 1px solid #2e2e2e;
}
.keybtn {
  display: flex;
  align-items: center;
  justify-content: center;
  width: 17px;
  height: 18px;
  margin-right: 4px;
  background: #484848;
}
.hscroll.wide {
  flex: none;
  width: 640px;
}
.gridbox {
  display: flex;
  align-items: center;
  width: 93px;
  height: 18px;
  margin-left: 6px;
  padding: 0 4px 0 4px;
  background: #2e2e2e;
}
.gridval {
  flex: 1;
  font-size: 13px;
  letter-spacing: .6px;
  text-align: right;
  color: #c98232;
}
.gridunit {
  margin-left: 7px;
  font-size: 9px;
  font-style: italic;
  color: #a06c30;
}
.snapbox {
  width: 50px;
  height: 18px;
  margin-left: 3px;
  padding: 3px 0 0 4px;
  background: #2e2e2e;
}

/* Navegador */
.browser {
  display: flex;
  flex-direction: column;
  width: 208px;
  margin-left: 0;
  background: #3a3a3a;
  border-radius: 3px;
  border: 2px solid #565656;
}
.b-title {
  margin: 0;
  padding: 2px 0 0 4px;
  height: 20px;
  font-size: 10.7px;
  font-weight: 700;
  color: #b4b8c2;
  white-space: nowrap;
}
.b-tabs {
  display: flex;
  align-items: center;
  gap: 16px;
  height: 22px;
  padding: 0 0 4px 9px;
}
.b-ic {
  width: 12px;
  height: 11px;
  background: #666;
}
.b-ic.orange {
  background: #f08a24;
}
.b-ic.disc {
  border-radius: 50%;
  background: #aebfd8;
}
.b-search {
  display: flex;
  align-items: center;
  justify-content: space-between;
  height: 18px;
  padding: 0 5px 0 8px;
  background: #1d1d1d;
}
.b-x {
  font-size: 15px;
  font-weight: 700;
  color: #eee;
}
.b-list {
  position: relative;
  height: 222px;
  background: #1d1d1d;
  overflow: hidden;
  border-top: 1px solid #666;
}
.b-rows {
  margin-top: -11px;
}
.row {
  display: flex;
  align-items: center;
  height: 18px;
  margin-right: 8px;
  font-size: 11px;
  color: #ddd;
}
.row.d0 {
  padding-left: 5px;
}
.row.d1 {
  padding-left: 14px;
}
.row.d2 {
  padding-left: 34px;
}
.row svg {
  margin-right: 4px;
}
.row.d1 svg {
  margin-left: 5px;
  margin-right: 6px;
}
.row.d0 svg {
  margin-left: 5px;
  margin-right: 7px;
}
.arrow {
  width: 0;
  border-left: 6px solid #777;
  border-top: 4px solid transparent;
  border-bottom: 4px solid transparent;
}
.arrow.open {
  border-left: 7px solid transparent;
  border-top: none;
  border-bottom: 7px solid #ddd;
}
.rname {
  flex: 1;
}
.rcount {
  margin-right: 5px;
  color: #bbb;
}
.row.selected {
  background: #6b6b6b;
  outline: 1px solid #b0b0b0;
  outline-offset: -1px;
  margin-left: 2px;
  padding-left: 32px;
  color: #1e1e1e;
}
.b-scroll {
  position: absolute;
  right: 1px;
  top: 84px;
  width: 6px;
  height: 83px;
  background: #5a5a5a;
}
.b-blank {
  flex: 1;
  background: #2c2c2c;
  border-top: 2px solid #555;
}
.b-info {
  height: 90px;
  padding: 3px 7px;
  background: #1f1f1f;
  border-top: 2px solid #555;
  font-size: 10.5px;
  letter-spacing: .2px;
  color: #ddd;
}
.info-name {
  padding: 2px 0 1px;
  line-height: 15px;
  border-bottom: 1px solid #333;
}
.info-desc {
  margin-top: 1px;
  line-height: 15px;
}
.info-line {
  line-height: 16px;
}

/* Barra inferior */
.bottombar {
  display: flex;
  align-items: center;
  height: 26px;
  padding: 2px 0 0 14px;
  background: #333;
  font-size: 10.5px;
  font-weight: 700;
}
.sep {
  width: 2px;
  height: 13px;
  margin: 0 13px 0 15px;
  background: #999;
}
.mode {
  margin-right: 15px;
  color: #e4e4e4;
}
.mode.active {
  color: #e8862a;
}
.mode.last {
  margin-right: 0;
}
.panels {
  display: flex;
  align-items: center;
  gap: 15px;
  margin-left: -1px;
}
.bright {
  display: flex;
  align-items: center;
  gap: 19px;
  margin-left: auto;
  padding-right: 11px;
}

/* Elementos superpuestos */
.tooltip {
  position: absolute;
  left: 224px;
  top: 678px;
  height: 14px;
  padding: 0 5px;
  background: #2e2e2e;
  font-size: 10.5px;
  letter-spacing: .4px;
  line-height: 14px;
  color: #ddd;
}
.cursor {
  position: absolute;
  left: 215px;
  top: 697px;
}
.watermark {
  position: absolute;
  left: 851px;
  top: 49px;
  width: 296px;
  height: 110px;
}
.wm-ellipse {
  width: 296px;
  height: 110px;
  border-radius: 50%;
  background: rgba(125, 155, 215, .45);
}
.wm-text {
  position: absolute;
  left: 44px;
  top: 22px;
  font-family: "Liberation Sans", sans-serif;
  font-size: 62px;
  line-height: 72px;
  letter-spacing: -1.2px;
  color: rgba(228, 230, 234, .88);
  -webkit-text-stroke: 1.6px rgba(228, 230, 234, .88);
}
.wm-line {
  position: absolute;
  left: 45px;
  top: 84px;
  width: 203px;
  height: 3px;
  background: rgba(228, 230, 234, .75);
}
```
